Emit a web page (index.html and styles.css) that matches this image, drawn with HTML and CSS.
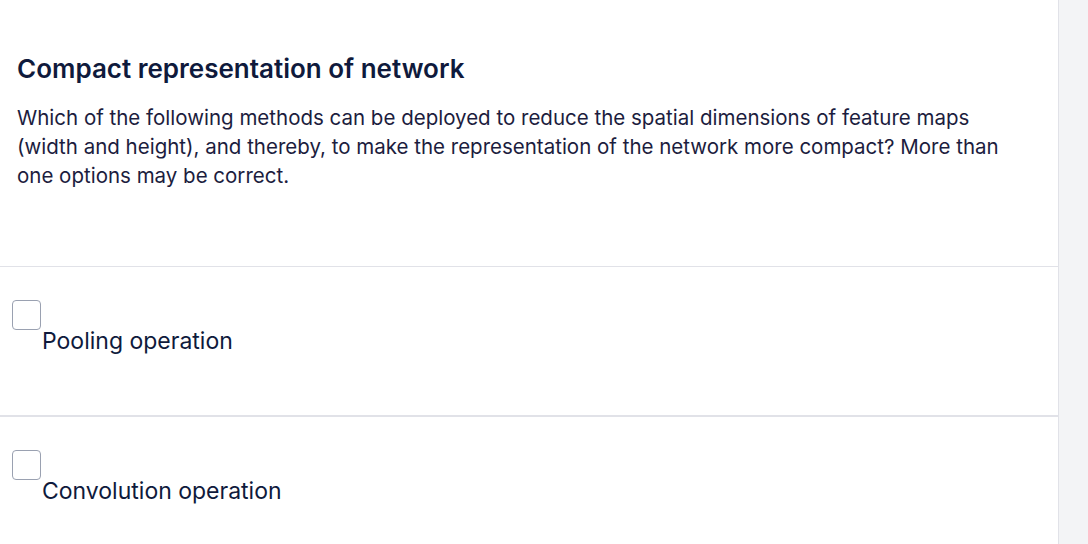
FILE: index.html
```html
<!DOCTYPE html>
<html>
<head>
<meta charset="utf-8">
<link rel="stylesheet" href="styles.css">
</head>
<body>
<div class="page">
  <main class="main">
    <section class="question">
      <h2 class="title">Compact representation of network</h2>
      <p class="prompt">Which of the following methods can be deployed to reduce the spatial dimensions of feature maps (width and height), and thereby, to make the representation of the network more compact? More than one options may be correct.</p>
    </section>
    <div class="options">
      <label class="option">
        <span class="box"></span>
        <span class="label">Pooling operation</span>
      </label>
      <label class="option">
        <span class="box"></span>
        <span class="label">Convolution operation</span>
      </label>
    </div>
  </main>
  <aside class="side"></aside>
</div>
</body>
</html>
```
FILE: styles.css
```css
html, body {
  margin: 0;
  padding: 0;
  background: #ffffff;
}
body {
  font-family: "Inter", "Open Sans", sans-serif;
  color: #1c1d3e;
}
.page {
  display: flex;
  height: 544px;
  overflow: hidden;
}
.main {
  width: 1058px;
  border-right: 1px solid #e1e2e8;
  flex: none;
}
.side {
  flex: 1;
  background: #f3f4f6;
}
.question {
  padding: 52px 40px 0 17px;
  height: 266px;
  box-sizing: border-box;
}
.title {
  margin: 0;
  font-size: 26px;
  font-weight: 600;
  line-height: 34px;
  color: #0f1a3c;
}
.prompt {
  margin: 17px 0 0;
  font-size: 20.5px;
  line-height: 29px;
}
.options {
  display: flex;
  flex-direction: column;
}
.option {
  display: flex;
  flex-direction: column;
  align-items: flex-start;
  padding: 33px 0 0 12px;
  height: 149px;
  box-sizing: border-box;
  border-top: 1px solid #e1e2e8;
}
.option + .option {
  border-top-width: 2px;
}
.box {
  width: 27px;
  height: 28px;
  border: 1px solid #9aa1b1;
  border-radius: 4px;
  background: #fff;
}
.label {
  margin-left: 30px;
  font-size: 23px;
  line-height: 22px;
  color: #0f1a3c;
}
```
